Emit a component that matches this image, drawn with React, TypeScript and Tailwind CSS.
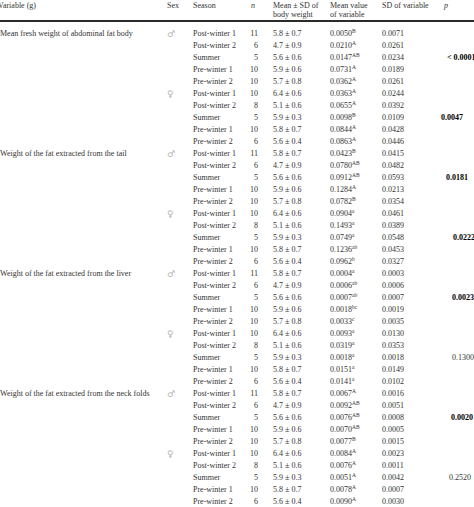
import React from 'react'

type Row = {
  season: string; n: number; msd: string; val: string; sup: string; sd: string
  p?: string; bold?: boolean; pl?: string
}

const maleBase = [
  { season: 'Post-winter 1', n: 11, msd: '5.8 ± 0.7' },
  { season: 'Post-winter 2', n: 6, msd: '4.7 ± 0.9' },
  { season: 'Summer', n: 5, msd: '5.6 ± 0.6' },
  { season: 'Pre-winter 1', n: 10, msd: '5.9 ± 0.6' },
  { season: 'Pre-winter 2', n: 10, msd: '5.7 ± 0.8' },
]
const femaleBase = [
  { season: 'Post-winter 1', n: 10, msd: '6.4 ± 0.6' },
  { season: 'Post-winter 2', n: 8, msd: '5.1 ± 0.6' },
  { season: 'Summer', n: 5, msd: '5.9 ± 0.3' },
  { season: 'Pre-winter 1', n: 10, msd: '5.8 ± 0.7' },
  { season: 'Pre-winter 2', n: 6, msd: '5.6 ± 0.4' },
]

// [value, superscript, sd]
type V = [string, string, string]
function build(m: V[], f: V[], pm: [string, boolean, string], pf: [string, boolean, string]): Row[] {
  const a = m.map((v, i) => ({ ...maleBase[i], val: v[0], sup: v[1], sd: v[2] } as Row))
  const b = f.map((v, i) => ({ ...femaleBase[i], val: v[0], sup: v[1], sd: v[2] } as Row))
  a[2] = { ...a[2], p: pm[0], bold: pm[1], pl: pm[2] }
  b[2] = { ...b[2], p: pf[0], bold: pf[1], pl: pf[2] }
  return [...a, ...b]
}

const groups = [
  {
    label: 'Mean fresh weight of abdominal fat body',
    rows: build(
      [['0.0050', 'B', '0.0071'], ['0.0210', 'A', '0.0261'], ['0.0147', 'AB', '0.0234'], ['0.0731', 'A', '0.0189'], ['0.0362', 'A', '0.0261']],
      [['0.0363', 'A', '0.0244'], ['0.0655', 'A', '0.0392'], ['0.0098', 'B', '0.0109'], ['0.0844', 'A', '0.0428'], ['0.0863', 'A', '0.0446']],
      ['< 0.0001', true, 'pl-[7px]'], ['0.0047', true, 'pl-[1px]'],
    ),
  },
  {
    label: 'Weight of the fat extracted from the tail',
    rows: build(
      [['0.0423', 'B', '0.0415'], ['0.0780', 'AB', '0.0482'], ['0.0912', 'AB', '0.0593'], ['0.1284', 'A', '0.0213'], ['0.0782', 'B', '0.0354']],
      [['0.0904', 'a', '0.0461'], ['0.1493', 'a', '0.0389'], ['0.0749', 'a', '0.0548'], ['0.1236', 'ab', '0.0453'], ['0.0962', 'b', '0.0327']],
      ['0.0181', true, 'pl-[6px]'], ['0.0222', true, 'pl-[13px]'],
    ),
  },
  {
    label: 'Weight of the fat extracted from the liver',
    rows: build(
      [['0.0004', 'a', '0.0003'], ['0.0006', 'ab', '0.0006'], ['0.0007', 'ab', '0.0007'], ['0.0018', 'bc', '0.0019'], ['0.0033', 'c', '0.0035']],
      [['0.0093', 'a', '0.0130'], ['0.0319', 'a', '0.0353'], ['0.0018', 'a', '0.0018'], ['0.0151', 'a', '0.0149'], ['0.0141', 'a', '0.0102']],
      ['0.0023', true, 'pl-[12px]'], ['0.1300', false, 'pl-[12px]'],
    ),
  },
  {
    label: 'Weight of the fat extracted from the neck folds',
    rows: build(
      [['0.0067', 'A', '0.0016'], ['0.0092', 'AB', '0.0051'], ['0.0076', 'AB', '0.0008'], ['0.0070', 'AB', '0.0005'], ['0.0077', 'B', '0.0015']],
      [['0.0084', 'A', '0.0023'], ['0.0076', 'A', '0.0011'], ['0.0051', 'A', '0.0042'], ['0.0078', 'A', '0.0007'], ['0.0090', 'A', '0.0030']],
      ['0.0020', true, 'pl-[11px]'], ['0.2520', false, 'pl-[9px]'],
    ),
  },
]

const cols = 'grid grid-cols-[167px_26px_47px_33px_57px_52px_58px_1fr]'

export default function App() {
  return (
    <div className="w-[474px] h-[507px] overflow-hidden bg-white text-[#333] text-[8px] font-['Liberation_Serif',serif]">
      <div className={`${cols} h-[20px] pt-[1px] leading-[9px]`}>
        <div className="-ml-[2px]">Variable (g)</div>
        <div>Sex</div>
        <div>Season</div>
        <div className="italic pl-[11px]">n</div>
        <div>Mean ± SD of<br />body weight</div>
        <div>Mean value<br />of variable</div>
        <div>SD of variable</div>
        <div className="italic pl-[4px]">p</div>
      </div>
      <div className="h-[1.5px] bg-[#2a2a2a]" />
      <div className="pt-[6px]">
        {groups.map(g =>
          g.rows.map((r, i) => (
            <div key={g.label + i} className={`${cols} h-[12px] leading-[12px] whitespace-nowrap`}>
              <div>{i === 0 ? g.label : ''}</div>
              <div className="text-[#b4b4b4] text-[9px] font-['DejaVu_Sans',sans-serif] leading-[12px]">
                {i === 0 ? '♂' : i === 5 ? '♀' : ''}
              </div>
              <div>{r.season}</div>
              <div className="text-right pr-[15px]">{r.n}</div>
              <div>{r.msd}</div>
              <div>
                {r.val}
                <sup className="text-[5.5px]">{r.sup}</sup>
              </div>
              <div>{r.sd}</div>
              <div className={`${r.pl ?? ''} ${r.bold ? 'font-bold text-black' : ''}`}>{r.p ?? ''}</div>
            </div>
          ))
        )}
      </div>
    </div>
  )
}
